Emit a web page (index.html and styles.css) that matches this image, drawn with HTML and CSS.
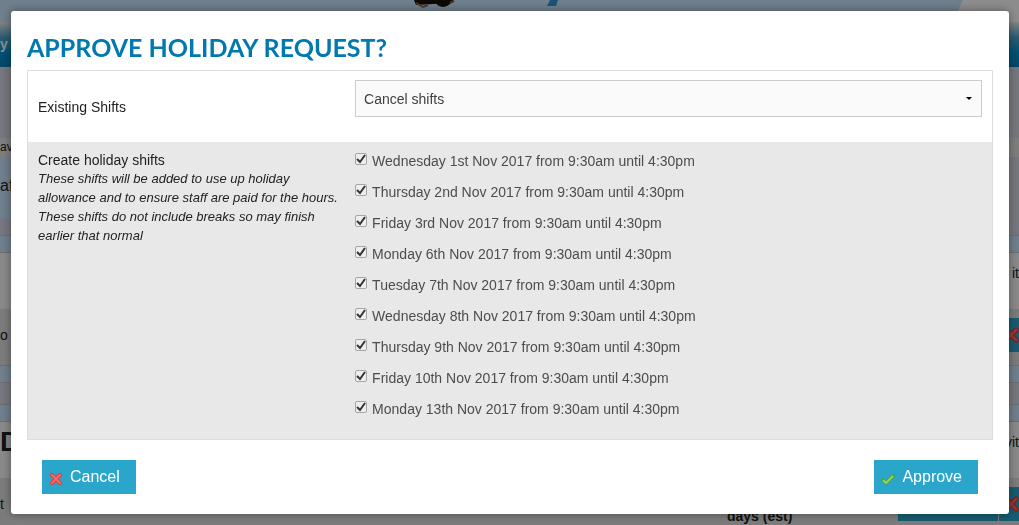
FILE: index.html
```html
<!DOCTYPE html>
<html lang="en">
<head>
  <meta charset="UTF-8" />
  <meta name="viewport" content="width=device-width, initial-scale=1.0"/>
  <title>Approve Holiday Request</title>
  <link rel="stylesheet" href="styles.css">
</head>
<body>
  <svg width="0" height="0" class="defs" aria-hidden="true">
    <symbol id="cross" viewBox="0 0 14 14">
      <path d="M3 3 L11 11 M11 3 L3 11" stroke="#e23c3c" stroke-width="4" stroke-linecap="round"/>
      <path d="M3 3 L11 11 M11 3 L3 11" stroke="#ff6a6a" stroke-width="2" stroke-linecap="round"/>
    </symbol>
    <symbol id="tick" viewBox="0 0 14 14">
      <path d="M2 8 L5 11 L12 4" fill="none" stroke="#4a9f3a" stroke-width="3.4" stroke-linejoin="round" stroke-linecap="square"/>
      <path d="M2 8 L5 11 L12 4" fill="none" stroke="#93d36c" stroke-width="2" stroke-linejoin="round"/>
    </symbol>
  </svg>

  <div class="page" aria-hidden="true">
    <div class="banner">
      <svg class="van" width="160" height="8" viewBox="0 0 160 8">
        <path d="M0 0 H40 L36 3 L2 5 Z" fill="#17120a"/>
        <path d="M2 3 L9 7 L14 5 M34 4 L40 1" fill="none" stroke="#8a6a40" stroke-width="2"/>
        <ellipse cx="29" cy="2" rx="7" ry="5" fill="#17120a"/>
        <path d="M136 0 H144 L142 6 H133 Z" fill="#2f9ad3"/>
      </svg>
      <svg class="corner" width="64" height="22" viewBox="0 0 64 22">
        <path d="M8 0 H64 V22 H-3 Z" fill="#fff"/>
      </svg>
    </div>
    <div class="nav">y</div>
    <div class="strip tall"></div>
    <div class="line small">av</div>
    <div class="panel">af</div>
    <div class="strip"></div>
    <div class="bar"></div>
    <div class="line row"><span></span><span class="edge">it</span></div>
    <div class="line row alt">
      <span>o</span>
      <span class="tile"><svg width="18" height="18"><use href="#cross"/></svg></span>
    </div>
    <div class="bar"></div>
    <div class="strip mid"></div>
    <div class="bar"></div>
    <div class="line row"><b class="big">D</b><span class="edge">vit</span></div>
    <div class="line row alt">
      <span>t</span>
      <b class="days">days (est)</b>
      <span class="tile wide"></span>
      <span class="tile"><svg width="18" height="18"><use href="#cross"/></svg></span>
    </div>
  </div>

  <div class="overlay">
    <form class="modal" role="dialog" aria-labelledby="title">
      <h1 id="title">APPROVE HOLIDAY REQUEST?</h1>
      <table>
        <tr>
          <td class="name"><label for="existing">Existing Shifts</label></td>
          <td>
            <select id="existing">
              <option>Cancel shifts</option>
              <option>Keep shifts</option>
            </select>
          </td>
        </tr>
        <tr class="shaded">
          <td class="name top">
            Create holiday shifts
            <em>These shifts will be added to use up holiday allowance and to ensure staff are paid for the hours. These shifts do not include breaks so may finish earlier that normal</em>
          </td>
          <td>
            <label class="shift"><input type="checkbox" checked>Wednesday 1st Nov 2017 from 9:30am until 4:30pm</label>
            <label class="shift"><input type="checkbox" checked>Thursday 2nd Nov 2017 from 9:30am until 4:30pm</label>
            <label class="shift"><input type="checkbox" checked>Friday 3rd Nov 2017 from 9:30am until 4:30pm</label>
            <label class="shift"><input type="checkbox" checked>Monday 6th Nov 2017 from 9:30am until 4:30pm</label>
            <label class="shift"><input type="checkbox" checked>Tuesday 7th Nov 2017 from 9:30am until 4:30pm</label>
            <label class="shift"><input type="checkbox" checked>Wednesday 8th Nov 2017 from 9:30am until 4:30pm</label>
            <label class="shift"><input type="checkbox" checked>Thursday 9th Nov 2017 from 9:30am until 4:30pm</label>
            <label class="shift"><input type="checkbox" checked>Friday 10th Nov 2017 from 9:30am until 4:30pm</label>
            <label class="shift"><input type="checkbox" checked>Monday 13th Nov 2017 from 9:30am until 4:30pm</label>
          </td>
        </tr>
      </table>
      <div class="actions">
        <button type="button"><svg width="14" height="14"><use href="#cross"/></svg>Cancel</button>
        <button type="submit"><svg width="14" height="14"><use href="#tick"/></svg>Approve</button>
      </div>
    </form>
  </div>
</body>
</html>
```
FILE: styles.css
```css
* {
  box-sizing: border-box;
}
body {
  margin: 0;
  font-family: "Liberation Sans", Arial, sans-serif;
  font-size: 14px;
  color: #222;
}
.defs {
  position: absolute;
}

/* page behind the dialog */
.page {
  height: 100vh;
  overflow: hidden;
  background: #d8dae7;
}
.banner {
  display: flex;
  justify-content: space-between;
  height: 22px;
  padding-left: 414px;
  background: #cae7ff;
}
.nav {
  height: 45px;
  line-height: 45px;
  font-weight: bold;
  color: #fff;
  background: linear-gradient(#eee, #4aa5cf 35%, #0090cf 70%, #0083bf);
}
.strip {
  height: 16px;
}
.strip.mid {
  height: 21px;
}
.strip.tall {
  height: 71px;
}
.line {
  background: #f9f9f9;
}
.line.small {
  height: 19px;
  line-height: 19px;
  font-size: 12px;
  background: #e6e6e6;
}
.panel {
  height: 62px;
  line-height: 58px;
  font-size: 16px;
  background: linear-gradient(90deg, #cae7ff 50%, #d8dae7 50%);
}
.bar {
  height: 18px;
  background: #cae7ff;
  border: 1px solid #c8c8c8;
  border-width: 1px 0;
}
.row {
  display: flex;
  justify-content: space-between;
  align-items: center;
  height: 56px;
  padding-bottom: 16px;
}
.row.alt {
  padding-bottom: 4px;
  background: #e1e1e1;
}
.edge {
  text-align: right;
}
.big {
  font-size: 28px;
}
.tile {
  display: flex;
  align-items: center;
  width: 20px;
  height: 34px;
  padding-left: 3px;
  margin-left: 1px;
  background: #2ba6cb;
}
.tile svg {
  flex: none;
}
.tile.wide {
  width: 100px;
}
.days {
  width: 170px;
  margin-left: auto;
  padding-top: 24px;
}

/* dialog */
.overlay {
  position: fixed;
  inset: 0;
  padding: 11px 10px 11px 11px;
  background: rgba(0, 0, 0, 0.45);
}
.modal {
  padding: 16px;
  background: #fff;
  border-radius: 3px;
  box-shadow: 0 0 10px rgba(0, 0, 0, 0.4);
}
h1 {
  margin: 0 0 3px;
  font-family: "ITC Avant Garde Gothic", "Century Gothic", Lato, sans-serif;
  font-size: 25px;
  line-height: 40px;
  font-weight: bold;
  color: #0078b0;
}
table {
  width: 100%;
  table-layout: fixed;
  border-spacing: 0;
  border: 1px solid #ddd;
}
td {
  padding: 9px 10px 9px 9px;
}
.name {
  width: 33%;
  padding: 9px 4px 9px 10px;
  line-height: 18px;
}
.top {
  vertical-align: top;
}
.shaded {
  background: #e8e8e8;
}
em {
  display: block;
  font-size: 13px;
  line-height: 19px;
}
select {
  display: block;
  width: 100%;
  height: 37px;
  margin-bottom: 16px;
  padding: 0 8px;
  font: inherit;
  color: #404040;
  appearance: none;
  border: 1px solid #ccc;
  border-radius: 0;
  background: #fafafa url("data:image/svg+xml,%3Csvg xmlns='http://www.w3.org/2000/svg' width='6' height='3'%3E%3Cpath d='M0 0h6L3 3z'/%3E%3C/svg%3E") no-repeat right 9px center;
}
.shift {
  display: flex;
  align-items: center;
  gap: 5px;
  height: 19px;
  margin-bottom: 12px;
  color: #4d4d4d;
}
.shift input {
  appearance: none;
  width: 12px;
  height: 12px;
  margin: 0 0 4px;
  border: 1px solid #a6a6a6;
  border-radius: 2px;
  background: #eee url("data:image/svg+xml,%3Csvg xmlns='http://www.w3.org/2000/svg' width='10' height='10'%3E%3Cpath d='M1 5l3 3l5-7' fill='none' stroke='%23333' stroke-width='2'/%3E%3C/svg%3E") no-repeat center;
}
.actions {
  display: flex;
  justify-content: space-between;
  padding: 20px 15px 4px;
}
button {
  display: flex;
  align-items: center;
  gap: 7px;
  height: 34px;
  padding: 0 16px 0 7px;
  font: inherit;
  font-size: 16px;
  color: #fff;
  background: #2ba6cb;
  border: 0;
}
button svg {
  margin-top: 3px;
}
```
